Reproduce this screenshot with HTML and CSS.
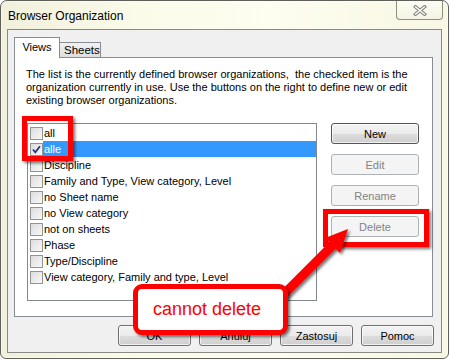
FILE: index.html
```html
<!DOCTYPE html>
<html lang="en">
<head>
    <meta charset="UTF-8">
    <meta name="viewport" content="width=device-width, initial-scale=1.0">
    <title>Browser Organization</title>
    <link rel="stylesheet" href="styles.css">
</head>
<body>
    <div class="window">
        <div class="titlebar">
            <span class="title">Browser Organization</span>
            <div class="close-btn">
                <svg width="14" height="11" viewBox="0 0 14 11">
                    <path d="M2.5 1.8 L11.5 9.2 M11.5 1.8 L2.5 9.2" stroke="#7a7a7a" stroke-width="3.4" stroke-linecap="square" fill="none"/>
                    <path d="M2.5 1.8 L11.5 9.2 M11.5 1.8 L2.5 9.2" stroke="#fbfbf6" stroke-width="1.4" stroke-linecap="square" fill="none"/>
                </svg>
            </div>
        </div>
        <div class="client">
            <div class="tabs">
                <div class="tab active">Views</div>
                <div class="tab">Sheets</div>
            </div>
            <div class="tab-panel">
                <p class="intro">The list is the currently defined browser organizations,&nbsp; the checked item is the<br>organization currently in use. Use the buttons on the right to define new or edit<br>existing browser organizations.</p>
                <div class="panel-body">
                    <ul class="org-list">
                        <li><span class="check"></span><span class="label">all</span></li>
                        <li class="selected"><span class="check checked"><svg width="11" height="11" viewBox="0 0 11 11"><path d="M2 5.5 L4.3 8.3 L9 2.2" stroke="#27367a" stroke-width="1.8" fill="none"/></svg></span><span class="label">alle</span></li>
                        <li><span class="check"></span><span class="label">Discipline</span></li>
                        <li><span class="check"></span><span class="label">Family and Type, View category, Level</span></li>
                        <li><span class="check"></span><span class="label">no Sheet name</span></li>
                        <li><span class="check"></span><span class="label">no View category</span></li>
                        <li><span class="check"></span><span class="label">not on sheets</span></li>
                        <li><span class="check"></span><span class="label">Phase</span></li>
                        <li><span class="check"></span><span class="label">Type/Discipline</span></li>
                        <li><span class="check"></span><span class="label">View category, Family and type, Level</span></li>
                    </ul>
                    <div class="side-buttons">
                        <button class="btn default">New</button>
                        <button class="btn" disabled>Edit</button>
                        <button class="btn" disabled>Rename</button>
                        <button class="btn" disabled>Delete</button>
                    </div>
                </div>
            </div>
            <div class="dialog-buttons">
                <button class="btn wide">OK</button>
                <button class="btn wide">Anuluj</button>
                <button class="btn wide">Zastosuj</button>
                <button class="btn wide">Pomoc</button>
            </div>
        </div>
    </div>

    <!-- annotations drawn over the dialog -->
    <div class="mark mark-check"></div>
    <div class="mark mark-delete"></div>
    <svg class="arrow" width="449" height="362" viewBox="0 0 449 362">
        <defs>
            <filter id="shadow" x="-20%" y="-20%" width="140%" height="140%">
                <feDropShadow dx="2" dy="2" stdDeviation="1.5" flood-color="#000" flood-opacity="0.55"/>
            </filter>
        </defs>
        <g filter="url(#shadow)" fill="#ff0000">
            <line x1="274" y1="304" x2="336" y2="242" stroke="#ff0000" stroke-width="9"/>
            <polygon points="348,229 325,238 340,253"/>
        </g>
    </svg>
    <div class="callout">cannot delete</div>
</body>
</html>
```
FILE: styles.css
```css
body {
    margin: 0;
    background: #fff;
    font-family: "Liberation Sans", Arial, sans-serif;
    font-size: 11px;
    color: #000;
    position: relative;
    width: 449px;
    height: 362px;
    overflow: hidden;
}
.window {
    box-sizing: border-box;
    width: 449px;
    height: 359px;
    border: 1px solid #5f5f5a;
    border-radius: 7px 7px 6px 6px;
    padding: 0 6px 5px 6px;
    background: linear-gradient(to right, #f1f0dc 0%, #fbfbea 30%, #fdfdf0 60%, #f8f7e4 100%);
    box-shadow: inset 0 0 0 1px rgba(255,255,255,0.6);
}
.titlebar {
    height: 28px;
    display: flex;
    justify-content: space-between;
    align-items: flex-start;
}
.title {
    font-size: 12px;
    line-height: 16px;
    padding: 7px 0 0 1px;
}
.close-btn {
    box-sizing: border-box;
    width: 47px;
    height: 19px;
    margin-right: -1px;
    border: 1px solid #8f8f80;
    border-top: none;
    border-radius: 0 0 4px 4px;
    background: linear-gradient(#fdfdf4, #f4f3e3);
    display: flex;
    align-items: center;
    justify-content: center;
}
.client {
    box-sizing: border-box;
    height: 324px;
    border: 1px solid #8a8a84;
    background: #f0f0f0;
    padding: 7px 7px 6px 6px;
    display: flex;
    flex-direction: column;
}
.tabs {
    display: flex;
    align-items: flex-end;
    height: 20px;
    position: relative;
    z-index: 1;
}
.tab {
    box-sizing: border-box;
    height: 15px;
    border: 1px solid #898c95;
    border-bottom: none;
    background: linear-gradient(#f2f2f2, #dedede);
    padding: 0 4px;
    line-height: 14px;
    margin-left: -1px;
    width: 42px;
    text-align: center;
    font-size: 11.5px;
}
.tab.active {
    height: 21px;
    margin-left: 0;
    margin-bottom: -1px;
    width: 46px;
    background: #fff;
    line-height: 18px;
    font-size: 11px;
    position: relative;
    z-index: 2;
}
.tab-panel {
    box-sizing: border-box;
    height: 260px;
    margin-right: 1px;
    border: 1px solid #898c95;
    background: #fff;
    padding: 10px 12px 0 11px;
}
.intro {
    margin: 0;
    line-height: 13px;
}
.panel-body {
    display: flex;
    margin-top: 16px;
    margin-left: 1px;
}
.org-list {
    box-sizing: border-box;
    width: 290px;
    height: 178px;
    margin: 0;
    padding: 1px 0 0 2px;
    list-style: none;
    border: 1px solid #828790;
    background: #fff;
}
.org-list li {
    height: 16px;
    display: flex;
    align-items: center;
}
.check {
    box-sizing: border-box;
    width: 13px;
    height: 13px;
    border: 1px solid #939393;
    background: linear-gradient(135deg, #dcdcdc, #f8f8f8);
    display: flex;
    align-items: center;
    justify-content: center;
    flex-shrink: 0;
}
.label {
    flex: 1;
    padding-left: 1px;
    line-height: 16px;
    white-space: nowrap;
}
.org-list li.selected .label {
    background: #3399ff;
    color: #fff;
}
.side-buttons {
    display: flex;
    flex-direction: column;
    gap: 10px;
    margin-left: 14px;
}
.btn {
    box-sizing: border-box;
    width: 88px;
    height: 21px;
    padding: 0;
    font-family: "Liberation Sans", Arial, sans-serif;
    font-size: 11px;
    font-weight: normal;
    color: #000;
    border: 1px solid #707070;
    border-radius: 3px;
    background: linear-gradient(#f2f2f2 0%, #ebebeb 50%, #dddddd 51%, #cfcfcf 100%);
    box-shadow: inset 0 0 0 1px rgba(255,255,255,0.7);
}
.btn.default {
    border-color: #555;
}
.btn:disabled {
    border-color: #adb2b5;
    background: #f4f4f4;
    color: #838383;
    box-shadow: none;
}
.dialog-buttons {
    display: flex;
    justify-content: flex-end;
    gap: 8px;
    margin-top: 8px;
}
.btn.wide {
    width: 73px;
}
.mark {
    position: absolute;
    box-sizing: border-box;
    border: 5px solid #ff0000;
    box-shadow: 2px 2px 3px rgba(0,0,0,0.55);
}
.mark-check {
    left: 22px;
    top: 116px;
    width: 51px;
    height: 45px;
}
.mark-delete {
    left: 323px;
    top: 209px;
    width: 106px;
    height: 38px;
}
.arrow {
    position: absolute;
    left: 0;
    top: 0;
    pointer-events: none;
}
.callout {
    position: absolute;
    left: 133px;
    top: 284px;
    box-sizing: border-box;
    width: 155px;
    height: 51px;
    border: 5px solid #ff0000;
    border-radius: 9px;
    background: #fff;
    box-shadow: 2px 2px 3px rgba(0,0,0,0.55);
    color: #ff0000;
    font-size: 18px;
    display: flex;
    align-items: center;
    padding: 0 0 1px 15px;
}
```
